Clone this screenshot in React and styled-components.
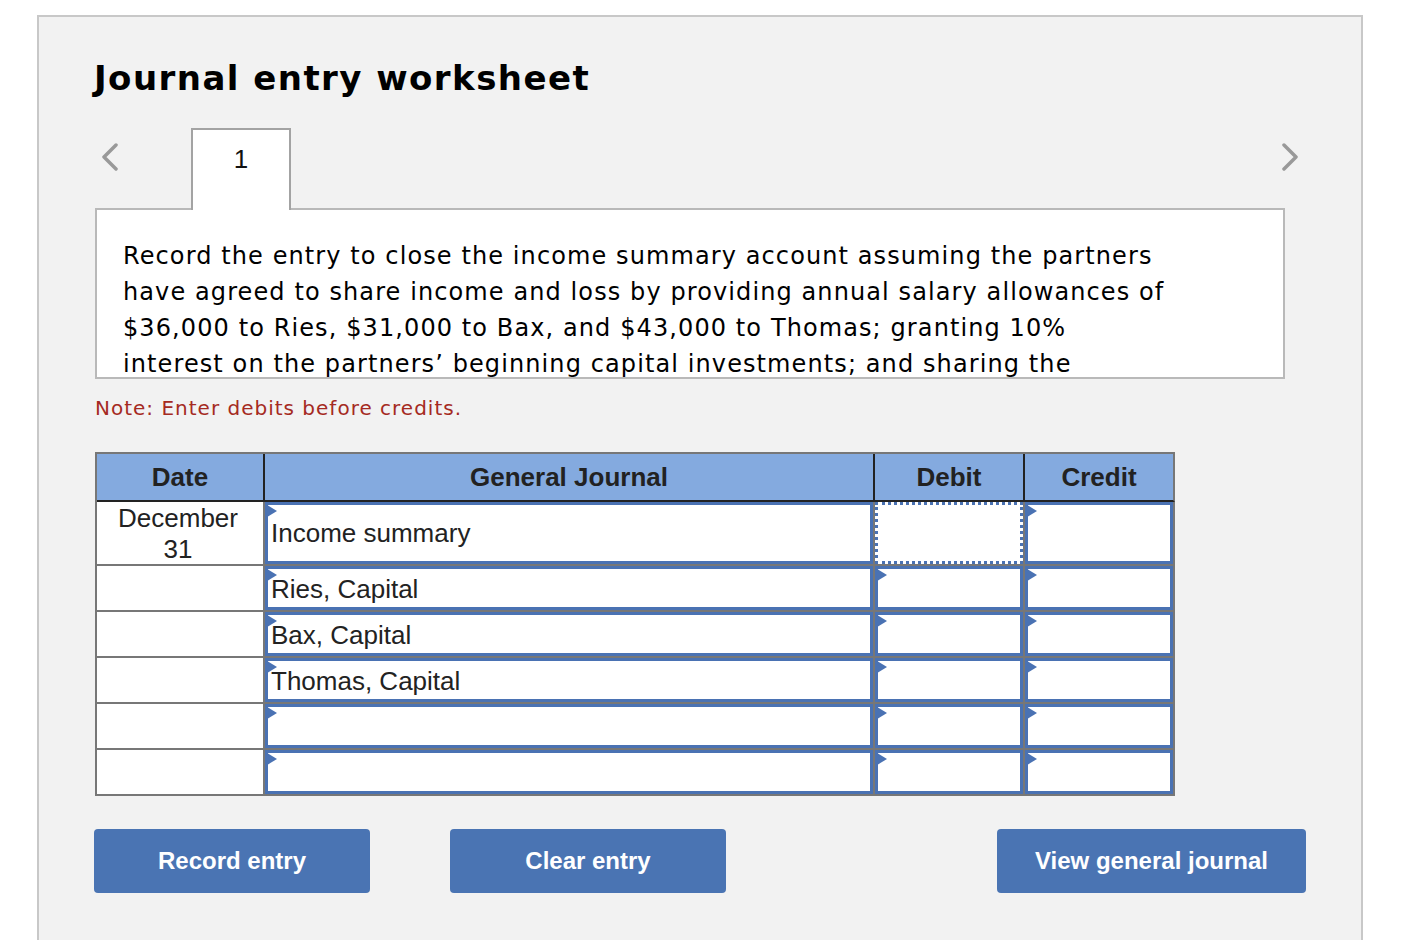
import React from "react";
import styled, { createGlobalStyle } from "styled-components";

const Global = createGlobalStyle`
  html, body { margin: 0; padding: 0; background: #ffffff; overflow: hidden; }
  * { box-sizing: border-box; }
`;

const Page = styled.div`
  padding: 15px 0 0 37px;
  height: 940px;
`;

const Panel = styled.div`
  width: 1326px;
  height: 960px;
  background: #f2f2f2;
  border: 2px solid #c8c8c8;
  border-bottom: none;
  padding: 41px 55px 0 56px;
`;

const Title = styled.h1`
  margin: 0;
  font-family: "DejaVu Sans", Verdana, sans-serif;
  font-weight: bold;
  font-size: 34px;
  letter-spacing: 1.45px;
  line-height: 40px;
  color: #000;
  margin-left: -1px;
`;

const TabRow = styled.div`
  display: flex;
  align-items: flex-start;
  height: 82px;
  margin-top: 30px;
  position: relative;
  z-index: 1;
`;

const Chevron = styled.svg`
  width: 20px;
  height: 30px;
  margin-top: 15px;
  flex: none;
  margin-left: ${(p) => p.$ml || "0"};
  margin-right: ${(p) => p.$mr || "0"};
`;

const Tab = styled.div`
  width: 100px;
  height: 82px;
  margin-left: 71px;
  background: #fff;
  border: 2px solid #a3a3a3;
  border-bottom: none;
  text-align: center;
  font-family: "Liberation Sans", Arial, sans-serif;
  font-size: 26px;
  line-height: 30px;
  padding-top: 14px;
  color: #111;
`;

const Prompt = styled.div`
  width: 1190px;
  height: 171px;
  margin-top: -2px;
  background: #fff;
  border: 2px solid #b9b9b9;
  overflow: hidden;
  padding: 28px 114px 0 26px;
  font-family: "DejaVu Sans", Verdana, sans-serif;
  font-size: 24px;
  letter-spacing: 1.1px;
  line-height: 36px;
  color: #000;
`;

const Note = styled.div`
  margin-top: 17px;
  font-family: "DejaVu Sans", Verdana, sans-serif;
  font-size: 20px;
  letter-spacing: 1px;
  line-height: 24px;
  color: #a52a22;
`;

const Grid = styled.div`
  margin-top: 32px;
  width: 1080px;
  display: grid;
  grid-template-columns: 168px 610px 150px 150px;
  grid-template-rows: 48px 64px repeat(5, 46px);
  border-left: 2px solid #777;
  border-top: 2px solid #777;
  font-family: "Liberation Sans", Arial, sans-serif;
  font-size: 26px;
  color: #222;
`;

const Head = styled.div`
  background: #84aadf;
  border-right: 2px solid ${(p) => (p.$last ? "#777" : "#222")};
  border-bottom: 2px solid #222;
  font-weight: bold;
  display: flex;
  align-items: center;
  justify-content: center;
  padding-top: 1px;
`;

const DateCell = styled.div`
  background: #fff;
  border-right: 2px solid #777;
  border-bottom: 2px solid #777;
  text-align: center;
  line-height: 31px;
  padding-top: 1px;
  padding-right: 4px;
`;

const Cell = styled.div`
  border-right: 2px solid #777;
  border-bottom: 2px solid #777;
  display: flex;
`;

const Field = styled.div`
  position: relative;
  flex: 1;
  background: #fff;
  border: 3px ${(p) => (p.$focused ? "dotted" : "solid")} #4a72b3;
  display: flex;
  align-items: center;
  padding-left: 3px;
  padding-top: ${(p) => (p.$tall ? "0" : "2px")};
  white-space: nowrap;
  overflow: hidden;
`;

const Marker = styled.span`
  position: absolute;
  top: 0;
  left: -1px;
  width: 0;
  height: 0;
  border-left: 10px solid #4a72b3;
  border-top: 6px solid transparent;
  border-bottom: 6px solid transparent;
`;

const Actions = styled.div`
  margin-top: 33px;
  display: flex;
  gap: 80px;
  margin-left: -1px;
`;

const Button = styled.button`
  height: 64px;
  width: ${(p) => p.$w}px;
  margin-left: ${(p) => (p.$push ? "auto" : "0")};
  border: none;
  border-radius: 4px;
  background: #4a74b3;
  color: #fff;
  font-family: "Liberation Sans", Arial, sans-serif;
  font-weight: bold;
  font-size: 24px;
  cursor: pointer;
  padding: 0;
`;

const rows = [
  { date: ["December", "31"], account: "Income summary", tall: true, focus: true },
  { account: "Ries, Capital" },
  { account: "Bax, Capital" },
  { account: "Thomas, Capital" },
  { account: "" },
  { account: "" },
];

function Entry({ focused, tall, children }) {
  return (
    <Cell>
      <Field $focused={focused} $tall={tall}>
        {!focused && <Marker />}
        {children}
      </Field>
    </Cell>
  );
}

export default function App() {
  return (
    <>
      <Global />
      <Page>
        <Panel>
          <Title>Journal entry worksheet</Title>
          <TabRow>
            <Chevron $ml="5px" viewBox="0 0 20 30">
              <polyline points="16,2 4,14 16,26" fill="none" stroke="#999" strokeWidth="3.5" strokeLinecap="round" strokeLinejoin="round" />
            </Chevron>
            <Tab>1</Tab>
            <Chevron $ml="auto" $mr="6px" viewBox="0 0 20 30">
              <polyline points="4,2 16,14 4,26" fill="none" stroke="#999" strokeWidth="3.5" strokeLinecap="round" strokeLinejoin="round" />
            </Chevron>
          </TabRow>
          <Prompt>
            Record the entry to close the income summary account assuming the partners
            have agreed to share income and loss by providing annual salary allowances of
            $36,000 to Ries, $31,000 to Bax, and $43,000 to Thomas; granting 10% interest on
            the partners’ beginning capital investments; and sharing the remainder equally.
          </Prompt>
          <Note>Note: Enter debits before credits.</Note>
          <Grid>
            <Head>Date</Head>
            <Head>General Journal</Head>
            <Head>Debit</Head>
            <Head $last>Credit</Head>
            {rows.map((r, i) => (
              <React.Fragment key={i}>
                <DateCell>
                  {r.date && (
                    <>
                      {r.date[0]}
                      <br />
                      {r.date[1]}
                    </>
                  )}
                </DateCell>
                <Entry tall={r.tall}>{r.account}</Entry>
                <Entry focused={r.focus} />
                <Entry />
              </React.Fragment>
            ))}
          </Grid>
          <Actions>
            <Button $w={276}>Record entry</Button>
            <Button $w={276}>Clear entry</Button>
            <Button $w={309} $push>View general journal</Button>
          </Actions>
        </Panel>
      </Page>
    </>
  );
}
